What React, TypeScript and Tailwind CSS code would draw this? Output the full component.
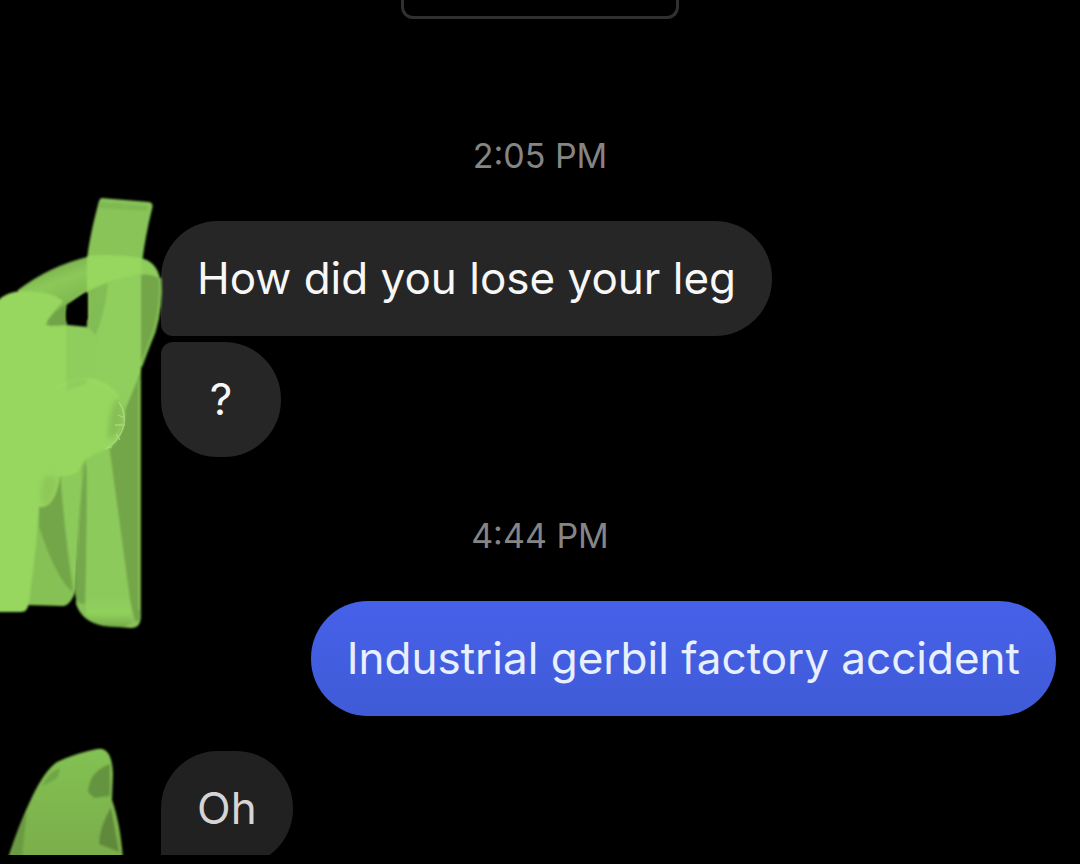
import React from 'react';
import clsx from 'clsx';

interface BubbleProps {
  children: React.ReactNode;
  className?: string;
}

const Bubble: React.FC<BubbleProps> = ({ children, className }) => (
  <p
    className={clsx(
      'flex h-[115px] min-w-[120px] items-center justify-center rounded-[57px] px-9 pb-[2px] text-[44px] leading-[56px]',
      className
    )}
  >
    {children}
  </p>
);

const Timestamp: React.FC<{ children: React.ReactNode }> = ({ children }) => (
  <time className="block text-center text-[34px] leading-10 text-[#858585]">{children}</time>
);

const Scribbles = () => (
  <svg
    className="pointer-events-none absolute top-0 left-0"
    width="180"
    height="855"
    viewBox="0 0 180 855"
    fill="none"
    aria-hidden="true"
  >
    <defs>
      <filter id="soft" x="-10%" y="-10%" width="120%" height="120%">
        <feGaussianBlur stdDeviation="1.3" />
      </filter>
      <filter id="softer" x="-20%" y="-20%" width="140%" height="140%">
        <feGaussianBlur stdDeviation="2.5" />
      </filter>
      <linearGradient id="fade" x1="0" y1="748" x2="0" y2="855" gradientUnits="userSpaceOnUse">
        <stop stopColor="#83c253" />
        <stop offset="1" stopColor="#7bae4b" />
      </linearGradient>
      <linearGradient id="arch" x1="48" y1="268" x2="62" y2="306" gradientUnits="userSpaceOnUse">
        <stop stopColor="#7cb34e" />
        <stop offset="0.4" stopColor="#8cc959" />
        <stop offset="1" stopColor="#7fb850" />
      </linearGradient>
      <linearGradient id="foot" x1="0" y1="596" x2="0" y2="630" gradientUnits="userSpaceOnUse">
        <stop stopColor="#8dca5b" />
        <stop offset="0.5" stopColor="#91d15d" />
        <stop offset="1" stopColor="#6fa346" />
      </linearGradient>
    </defs>

    {/* Upper marker strokes */}
    <g filter="url(#soft)">
      <path d="M101 198L149 202Q154 203 152 209Q143 246 141 275L141 617Q140 629 131 628L104 626Q82 622 76 604L78 470L87 324L87 260Q89 238 99 201Z" fill="#88c459" />
      <path d="M101 202L148 206L147 211L99 208Z" fill="#7eb951" />
      <path d="M18 290Q50 266 87 257V292Q66 304 60 322L20 330Z" fill="url(#arch)" />
      <path d="M141 270Q156 271 161 280Q163 305 155 332Q146 350 141 369Z" fill="#73a548" />
      <path d="M160 278Q162 305 154 332Q146 352 141 366" stroke="#82bc52" strokeWidth="3" />
      <path d="M87 256Q115 253 141 258V276Q112 278 87 291Z" fill="#97d75f" />
      <path d="M141 258Q157 262 160 279Q150 273 141 275Z" fill="#8dcd5b" />
      <path d="M107 282L141 273V370L126 420L80 400L88 345L96 335Q106 308 107 282Z" fill="#90cf5d" />
      <path d="M88 292L108 283Q106 310 95 336L88 324Z" fill="#82bc54" />
      <path d="M141 371V616Q139 623 135 621L129 595L109 448L125 410Z" fill="#73a548" />
      <path d="M139 380V610" stroke="#84bb52" strokeWidth="2" />
      <path d="M80 465Q86 455 88 480L85 604Q76 605 75 594Z" fill="#74a74b" />
      <path d="M87 458L109 445L123 548L131 608L133 622L124 627L104 626Q92 624 86 613Z" fill="url(#foot)" />
    </g>

    {/* Left lower strokes */}
    <g filter="url(#soft)">
      <path d="M29 490L85 455Q82 490 79 520L76 590Q70 607 62 606L25 605Z" fill="#86c156" />
      <path d="M39 507L60 473Q64 530 73 592Q57 581 39 527Z" fill="#73a548" />
      <path d="M61 474L81 465Q80 530 75 590Q65 535 61 474Z" fill="#8dca5b" />
      <path d="M58 324L88 327L97 340L95 400L60 400Z" fill="#8fcd5c" />
      <path d="M-4 303Q5 291 25 291Q56 292 63 302Q52 312 46 324L66 326V380L92 378Q121 385 125 415Q121 446 104 450Q92 455 84 461L78 472Q69 477 60 476Q55 509 39 507L36 545L29 602Q28 612 21 612H-4Z" fill="#97d75f" />
      <path d="M67 326L93 332L97 338Q88 358 86 384L67 390Z" fill="#8fcd5c" />
      <path d="M47 321Q54 311 66 305L67 325L50 326Z" fill="#71a348" />
    </g>
    <path d="M67 305L87 293V319Q84 323 67 321Z" fill="#020301" stroke="#020301" filter="url(#soft)" />
    <path d="M45 476H57Q55 505 42 505Q38 490 45 476Z" fill="#85bd55" opacity="0.55" filter="url(#softer)" />
    <path d="M55 390Q88 365 118 398" stroke="#a2dc6b" strokeWidth="2" opacity="0.35" filter="url(#soft)" />
    <path d="M116 398Q107 417 108 440Q120 436 124 420Q125 404 116 398Z" fill="#84ba55" opacity="0.8" filter="url(#softer)" />
    <path d="M119 402Q128 416 122 431Q116 444 105 449M115 425L125 425M116 434L120 440M118 415L125 418M107 446L112 448" stroke="#b3dc83" strokeWidth="1.3" opacity="0.8" />

    {/* Lower marker strokes */}
    <g filter="url(#soft)">
      <path d="M8 858Q19 824 32 797Q45 770 57 762Q76 753 97 749Q112 746 113 774L112 800Q120 822 123 858Z" fill="url(#fade)" />
      <path d="M42 786Q49 771 60 768L58 777Q52 782 42 786Z" fill="#71a647" />
      <path d="M110 764Q89 771 88 792L94 798L110 796Z" fill="#65943f" />
      <path d="M111 807Q99 828 99 844L119 852Z" fill="#60893b" />
      <path d="M27 812Q15 833 10 858H22Q24 835 27 812Z" fill="#6b9b42" />
    </g>
  </svg>
);

export default function App() {
  return (
    <div className="flex h-screen flex-col overflow-hidden bg-black pb-[9px] font-['Inter','Liberation_Sans',sans-serif]">
      <main className="relative flex-1 overflow-hidden">
        <div className="mx-auto h-[19px] w-[278px] rounded-b-xl border-3 border-t-0 border-[#303030]" />

        <section className="pt-[117px]">
          <Timestamp>2:05 PM</Timestamp>
          <div className="mt-[45px] flex flex-col items-start gap-[6px] pl-[161px] text-[#f7f7f7]">
            <Bubble className="rounded-bl-xl bg-[#262626]">How did you lose your leg</Bubble>
            <Bubble className="rounded-tl-xl bg-[#262626]">?</Bubble>
          </div>
        </section>

        <section className="pt-[59px]">
          <Timestamp>4:44 PM</Timestamp>
          <div className="mt-[45px] flex justify-end pr-6">
            <Bubble className="bg-linear-to-b from-[#4661e9] to-[#3f5bd7] text-[#e8efff]">
              Industrial gerbil factory accident
            </Bubble>
          </div>
          <div className="mt-[35px] flex pl-[161px]">
            <Bubble className="rounded-bl-xl bg-[#212121] text-[#d5d5d5]">Oh</Bubble>
          </div>
        </section>

        <Scribbles />
      </main>
    </div>
  );
}
